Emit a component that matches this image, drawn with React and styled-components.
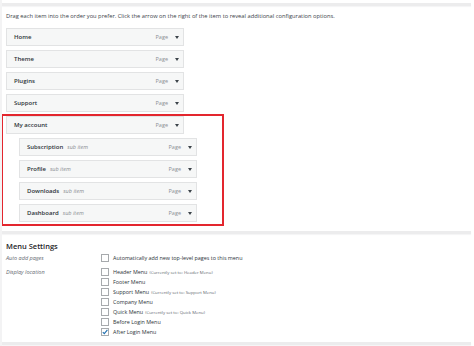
import React from "react";
import styled, { createGlobalStyle } from "styled-components";

const GlobalStyle = createGlobalStyle`
  html, body {
    margin: 0;
    padding: 0;
    background: #ffffff;
  }
  body {
    font-family: "Open Sans", "Noto Sans", sans-serif;
    color: #1d2327;
  }
`;

const Page = styled.div`
  display: flex;
  flex-direction: column;
  width: 474px;
  height: 346px;
  overflow: hidden;
  box-sizing: border-box;
  border-left: 2px solid #f3f3f4;
`;

const Bar = styled.div`
  flex: none;
  height: 3px;
  margin: ${(p) => p.$margin};
  background: #ececed;
  box-shadow: 0 1px 1px #f4f4f5;
`;

const Intro = styled.p`
  margin: 6px 0 0 4px;
  font-size: 5.75px;
  line-height: 8px;
  color: #3c434a;
`;

const Items = styled.div`
  display: flex;
  flex-direction: column;
  gap: 4px;
  margin: 8px 0 0 4px;
`;

const Highlight = styled.div`
  display: flex;
  flex-direction: column;
  gap: 4px;
  width: 216px;
  margin: -2px 0 0 -5px;
  padding: 0 0 2px 3px;
  border: 2px solid #e3262e;
`;

const Item = styled.div`
  box-sizing: border-box;
  display: flex;
  align-items: center;
  width: 178px;
  height: 18px;
  margin-left: ${(p) => (p.$sub ? "13px" : "0")};
  padding: 0 4px 0 7px;
  background: #f6f7f7;
  border: 1px solid #e2e3e4;
  font-size: 6px;
`;

const Title = styled.span`
  font-weight: 600;
  color: #2c3338;
`;

const SubLabel = styled.span`
  margin-left: 4px;
  font-style: italic;
  color: #8c8f94;
  font-size: 5.5px;
`;

const Kind = styled.span`
  margin-left: auto;
  color: #8c8f94;
  font-size: 5.5px;
`;

const Arrow = styled.span`
  margin-left: 7px;
  width: 0;
  height: 0;
  border-left: 2px solid transparent;
  border-right: 2px solid transparent;
  border-top: 3px solid #3c434a;
`;

const Settings = styled.div`
  flex: 1;
  padding: 7px 0 0 4px;
`;

const Heading = styled.h3`
  margin: 0 0 2px;
  font-size: 7.5px;
  line-height: 10px;
  font-weight: 600;
  color: #1d2327;
`;

const Row = styled.div`
  display: flex;
  margin-bottom: 4px;
`;

const RowLabel = styled.div`
  width: 95px;
  font-size: 5.5px;
  line-height: 10px;
  font-style: italic;
  color: #646970;
`;

const Options = styled.div`
  display: flex;
  flex-direction: column;
`;

const Option = styled.label`
  display: flex;
  align-items: center;
  height: 10px;
  font-size: 5.4px;
  color: #2c3338;
`;

const Box = styled.span`
  box-sizing: border-box;
  position: relative;
  width: 8px;
  height: 8px;
  margin-right: 4px;
  border: 1px solid #a7aaad;
  background: #ffffff;
`;

const Note = styled.span`
  margin-left: 2px;
  font-size: 4.3px;
  color: #646970;
`;

const Check = () => (
  <svg width="8" height="8" viewBox="0 0 8 8" style={{ position: "absolute", left: -1, top: -1 }}>
    <path d="M1.8 4.2 L3.3 5.7 L6.4 1.8" fill="none" stroke="#2271b1" strokeWidth="1.1" />
  </svg>
);

const top = ["Home", "Theme", "Plugins", "Support"];
const subs = ["Subscription", "Profile", "Downloads", "Dashboard"];
const locations = [
  { name: "Header Menu", note: "(Currently set to: Header Menu)" },
  { name: "Footer Menu" },
  { name: "Support Menu", note: "(Currently set to: Support Menu)" },
  { name: "Company Menu" },
  { name: "Quick Menu", note: "(Currently set to: Quick Menu)" },
  { name: "Before Login Menu" },
  { name: "After Login Menu", checked: true },
];

const MenuItem = ({ title, sub }) => (
  <Item $sub={sub}>
    <Title>{title}</Title>
    {sub && <SubLabel>sub item</SubLabel>}
    <Kind>Page</Kind>
    <Arrow />
  </Item>
);

export default function App() {
  return (
    <Page>
      <GlobalStyle />
      <Bar $margin="3px 3px 0 0" />
      <Intro>
        Drag each item into the order you prefer. Click the arrow on the right of the item to reveal additional
        configuration options.
      </Intro>
      <Items>
        {top.map((t) => (
          <MenuItem key={t} title={t} />
        ))}
        <Highlight>
          <MenuItem title="My account" />
          {subs.map((t) => (
            <MenuItem key={t} title={t} sub />
          ))}
        </Highlight>
      </Items>
      <Bar $margin="5px 3px 0 0" />
      <Settings>
        <Heading>Menu Settings</Heading>
        <Row>
          <RowLabel>Auto add pages</RowLabel>
          <Options>
            <Option>
              <Box />
              Automatically add new top-level pages to this menu
            </Option>
          </Options>
        </Row>
        <Row>
          <RowLabel>Display location</RowLabel>
          <Options>
            {locations.map((l) => (
              <Option key={l.name}>
                <Box>{l.checked && <Check />}</Box>
                {l.name}
                {l.note && <Note>{l.note}</Note>}
              </Option>
            ))}
          </Options>
        </Row>
      </Settings>
      <Bar $margin="0 3px 1px 0" />
    </Page>
  );
}
